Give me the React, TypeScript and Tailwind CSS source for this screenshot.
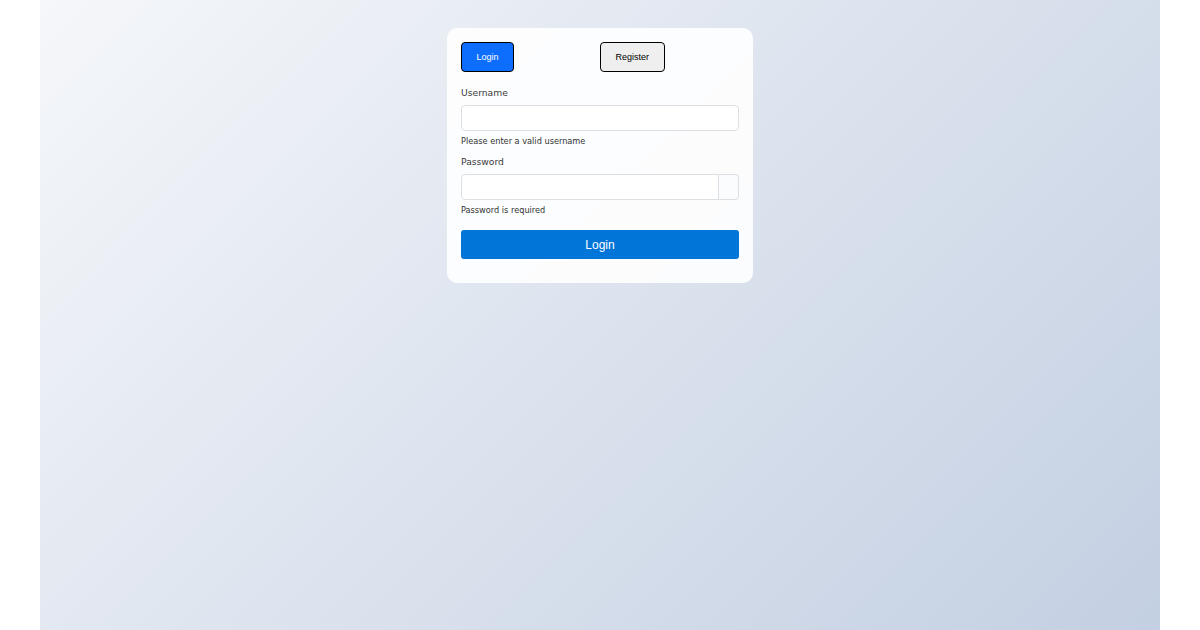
import { useState } from 'react';

type Tab = 'login' | 'register';

export default function App() {
  const [tab, setTab] = useState<Tab>('login');

  return (
    <div className="min-h-[630px] w-full bg-white">
      <div className="mx-auto flex h-[630px] w-[1120px] justify-center bg-[linear-gradient(135deg,#f5f7fa_0%,#c3cfe2_100%)] pt-7 font-['DejaVu_Sans',sans-serif]">
        <div className="h-fit w-[306px] rounded-[10px] bg-white/90 px-[14px] pb-6 pt-[14px]">
          {/* Tabs */}
          <div className="grid grid-cols-2">
            <div>
              <button
                type="button"
                onClick={() => setTab('login')}
                className={
                  tab === 'login'
                    ? "h-[30px] rounded-[4px] border border-black bg-[#0d6efd] px-[14.5px] pt-px font-['Liberation_Sans',Arial,sans-serif] text-[9px] text-white"
                    : "h-[30px] rounded-[4px] border border-black bg-[#efefef] px-[14.5px] pt-px font-['Liberation_Sans',Arial,sans-serif] text-[9px] text-black"
                }
              >
                Login
              </button>
            </div>
            <div>
              <button
                type="button"
                onClick={() => setTab('register')}
                className={
                  tab === 'register'
                    ? "h-[30px] rounded-[4px] border border-black bg-[#0d6efd] px-[14.5px] pt-px font-['Liberation_Sans',Arial,sans-serif] text-[9px] text-white"
                    : "h-[30px] rounded-[4px] border border-black bg-[#efefef] px-[14.5px] pt-px font-['Liberation_Sans',Arial,sans-serif] text-[9px] text-black"
                }
              >
                Register
              </button>
            </div>
          </div>

          {/* Username */}
          <label className="mt-[14px] block text-[9.2px] leading-[14px] text-[#3a3a3a]">Username</label>
          <input
            type="text"
            className="mt-[5px] block h-[26px] w-full rounded-[4px] border border-[#dcdfe3] bg-white px-2 text-[10px] outline-none"
          />
          <p className="mt-[4px] text-[8.2px] leading-[12px] text-[#333]">Please enter a valid username</p>

          {/* Password */}
          <label className="mt-[8px] block text-[9.2px] leading-[14px] text-[#3a3a3a]">Password</label>
          <div className="mt-[5px] flex h-[26px]">
            <input
              type="password"
              className="h-full min-w-0 flex-1 rounded-l-[4px] border border-[#dcdfe3] bg-white px-2 text-[10px] outline-none"
            />
            <button
              type="button"
              aria-label="Show password"
              className="h-full w-5 rounded-r-[4px] border border-l-0 border-[#dcdfe3] bg-[#fbfcfd]"
            />
          </div>
          <p className="mt-[4px] text-[8.2px] leading-[12px] text-[#333]">Password is required</p>

          <button
            type="button"
            className="mt-[14px] h-[29px] w-full rounded-[3px] bg-[#0275d8] font-['Liberation_Sans',Arial,sans-serif] text-[12px] text-white"
          >
            Login
          </button>
        </div>
      </div>
    </div>
  );
}
